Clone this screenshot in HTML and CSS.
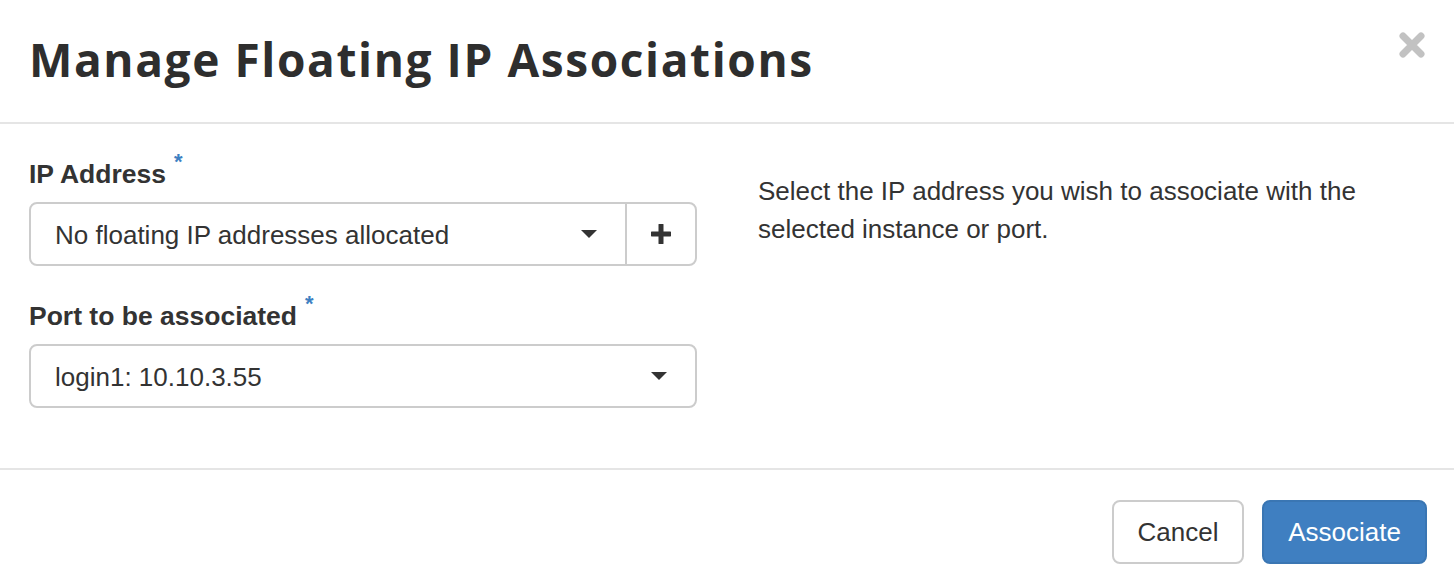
FILE: index.html
```html
<!DOCTYPE html>
<html lang="en">
<head>
<meta charset="utf-8">
<title>Manage Floating IP Associations</title>
<link rel="stylesheet" href="styles.css">
</head>
<body>
<div class="modal">
  <div class="modal-header">
    <h3 class="modal-title">Manage Floating IP Associations</h3>
    <button class="close" aria-label="Close">
      <svg width="26" height="26" viewBox="0 0 26 26"><path d="M4 4 L22 22 M22 4 L4 22" stroke="#c2c2c2" stroke-width="7" stroke-linecap="round"/></svg>
    </button>
  </div>
  <div class="modal-body">
    <div class="col col-left">
      <div class="form-group">
        <label class="control-label">IP Address<span class="req">*</span></label>
        <div class="input-group">
          <div class="select">
            <span>No floating IP addresses allocated</span>
            <span class="caret"></span>
          </div>
          <div class="addon">
            <svg width="20" height="20" viewBox="0 0 20 20"><path d="M10 1 V19 M1 10 H19" stroke="#333" stroke-width="5" stroke-linecap="round"/></svg>
          </div>
        </div>
      </div>
      <div class="form-group">
        <label class="control-label">Port to be associated<span class="req">*</span></label>
        <div class="select full">
          <span>login1: 10.10.3.55</span>
          <span class="caret"></span>
        </div>
      </div>
    </div>
    <div class="col col-right">
      <p class="help">Select the IP address you wish to associate with the selected instance or port.</p>
    </div>
  </div>
  <div class="modal-footer">
    <button class="btn btn-default">Cancel</button>
    <button class="btn btn-primary">Associate</button>
  </div>
</div>
</body>
</html>
```
FILE: styles.css
```css
* { box-sizing: border-box; }
html, body { margin: 0; padding: 0; background: #fff; }
body {
  font-family: "Liberation Sans", Arial, sans-serif;
  font-size: 26px;
  color: #333;
}
.modal { width: 1454px; }
.modal-header {
  height: 124px;
  border-bottom: 2px solid #e5e5e5;
  display: flex;
  align-items: flex-start;
  justify-content: space-between;
  padding: 0 29px 0 29px;
}
.modal-title {
  margin: 0;
  margin-top: 29px;
  font-family: "Open Sans", sans-serif;
  font-weight: 700;
  font-size: 46px;
  line-height: 60px;
  color: #2e2e2e;
  letter-spacing: 1.6px;
}
.close {
  background: none;
  border: 0;
  padding: 0;
  margin-top: 32px;
  width: 26px;
  height: 26px;
  cursor: pointer;
}
.close svg { display: block; }
.modal-body {
  display: flex;
  padding: 30px 29px 30px 29px;
}
.col { width: 50%; }
.col-left { padding-right: 30px; }
.col-right { padding-left: 31px; }
.form-group { margin-bottom: 30px; }
.control-label {
  display: block;
  font-weight: 700;
  font-size: 26.5px;
  line-height: 40px;
  margin-bottom: 8px;
}
.req {
  color: #3d7fc2;
  font-size: 22px;
  vertical-align: top;
  position: relative;
  top: -12px;
  margin-left: 8px;
}
.input-group {
  display: flex;
  height: 64px;
  border: 2px solid #cccccc;
  border-radius: 8px;
}
.select {
  flex: 1;
  display: flex;
  align-items: center;
  justify-content: space-between;
  padding: 0 28px 0 24px;
  height: 100%;
  color: #333;
}
.select.full {
  height: 64px;
  border: 2px solid #cccccc;
  border-radius: 8px;
}
.select span:first-child { padding-top: 2px; }
.caret {
  width: 0; height: 0;
  border-left: 8px solid transparent;
  border-right: 8px solid transparent;
  border-top: 8px solid #333;
}
.addon {
  width: 70px;
  border-left: 2px solid #cccccc;
  display: flex;
  align-items: center;
  justify-content: center;
}
.addon svg { display: block; }
.help {
  margin: 0;
  margin-top: 18px;
  line-height: 38px;
  color: #333;
}
.modal-footer {
  border-top: 2px solid #e5e5e5;
  padding: 30px 27px 0 0;
  display: flex;
  justify-content: flex-end;
  gap: 18px;
}
.btn {
  font-family: "Liberation Sans", Arial, sans-serif;
  font-size: 26px;
  height: 64px;
  border-radius: 8px;
  border: 2px solid #ccc;
  background: #fff;
  color: #333;
  padding: 0 20px;
  cursor: pointer;
}
.btn-default { width: 132px; }
.btn-primary {
  width: 165px;
  background: #3f7fc1;
  border-color: #3a76b3;
  color: #fff;
}
```
